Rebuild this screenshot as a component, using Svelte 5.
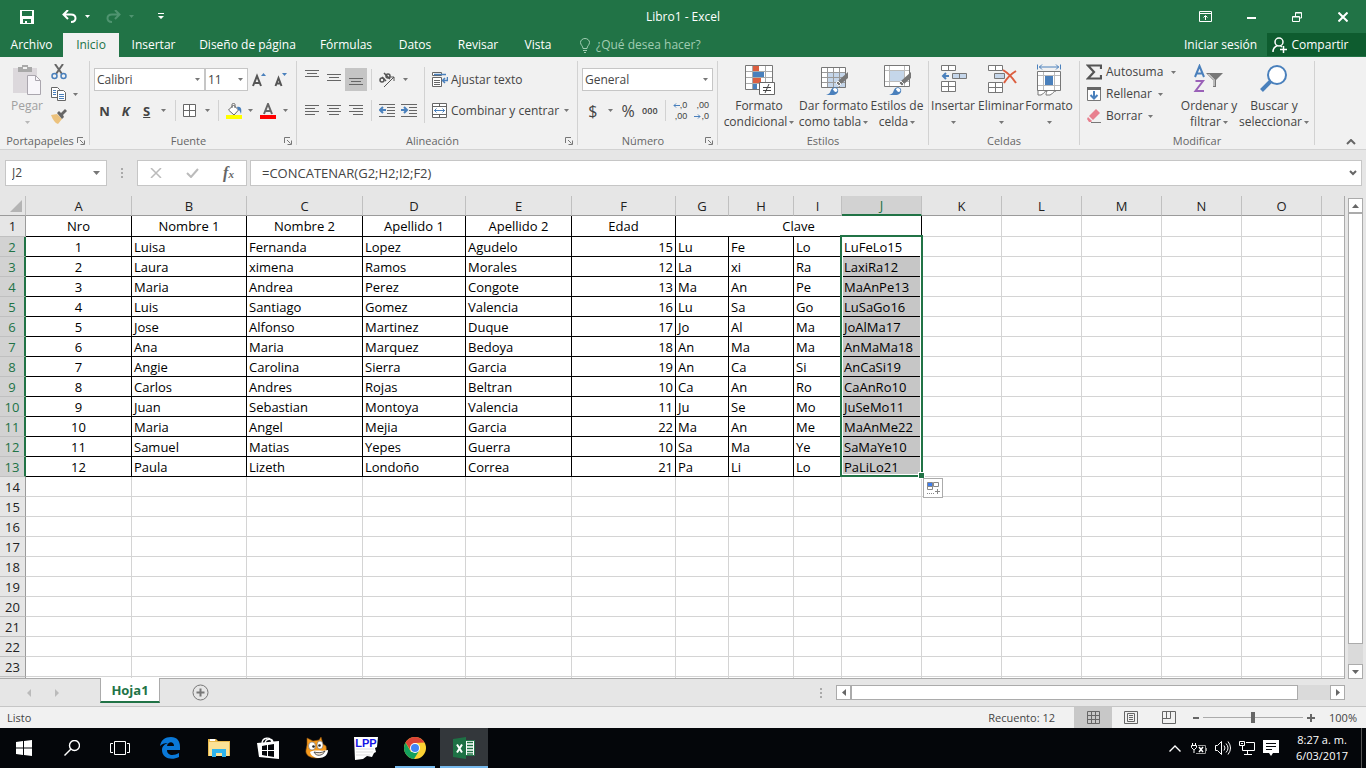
<script lang="ts">
  interface Column {
    id: string;
    width?: number;
  }

  const tabs = [
    { label: 'Archivo', width: 63 },
    { label: 'Inicio', width: 56 },
    { label: 'Insertar', width: 69 },
    { label: 'Diseño de página', width: 119 },
    { label: 'Fórmulas', width: 78 },
    { label: 'Datos', width: 60 },
    { label: 'Revisar', width: 66 },
    { label: 'Vista', width: 54 },
  ];

  const columns: Column[] = [
    { id: 'A', width: 106 },
    { id: 'B', width: 115 },
    { id: 'C', width: 116 },
    { id: 'D', width: 103 },
    { id: 'E', width: 106 },
    { id: 'F', width: 104 },
    { id: 'G', width: 53 },
    { id: 'H', width: 65 },
    { id: 'I', width: 48 },
    { id: 'J', width: 80 },
    { id: 'K', width: 80 },
    { id: 'L', width: 80 },
    { id: 'M', width: 80 },
    { id: 'N', width: 80 },
    { id: 'O', width: 80 },
    { id: '' },
  ];

  const headings = ['Nro', 'Nombre 1', 'Nombre 2', 'Apellido 1', 'Apellido 2', 'Edad'];

  const people = [
    ['1', 'Luisa', 'Fernanda', 'Lopez', 'Agudelo', '15', 'Lu', 'Fe', 'Lo', 'LuFeLo15'],
    ['2', 'Laura', 'ximena', 'Ramos', 'Morales', '12', 'La', 'xi', 'Ra', 'LaxiRa12'],
    ['3', 'Maria', 'Andrea', 'Perez', 'Congote', '13', 'Ma', 'An', 'Pe', 'MaAnPe13'],
    ['4', 'Luis', 'Santiago', 'Gomez', 'Valencia', '16', 'Lu', 'Sa', 'Go', 'LuSaGo16'],
    ['5', 'Jose', 'Alfonso', 'Martinez', 'Duque', '17', 'Jo', 'Al', 'Ma', 'JoAlMa17'],
    ['6', 'Ana', 'Maria', 'Marquez', 'Bedoya', '18', 'An', 'Ma', 'Ma', 'AnMaMa18'],
    ['7', 'Angie', 'Carolina', 'Sierra', 'Garcia', '19', 'An', 'Ca', 'Si', 'AnCaSi19'],
    ['8', 'Carlos', 'Andres', 'Rojas', 'Beltran', '10', 'Ca', 'An', 'Ro', 'CaAnRo10'],
    ['9', 'Juan', 'Sebastian', 'Montoya', 'Valencia', '11', 'Ju', 'Se', 'Mo', 'JuSeMo11'],
    ['10', 'Maria', 'Angel', 'Mejia', 'Garcia', '22', 'Ma', 'An', 'Me', 'MaAnMe22'],
    ['11', 'Samuel', 'Matias', 'Yepes', 'Guerra', '10', 'Sa', 'Ma', 'Ye', 'SaMaYe10'],
    ['12', 'Paula', 'Lizeth', 'Londoño', 'Correa', '21', 'Pa', 'Li', 'Lo', 'PaLiLo21'],
  ];

  // the last row only peeks out above the sheet tabs, so it has no number
  const emptyRows = [...Array.from({ length: 10 }, (_, i) => String(i + 14)), ''];
  const rowHeight = 20;

  let activeTab = $state('Inicio');
  let formula = $state('=CONCATENAR(G2;H2;I2;F2)');
  let cellName = $state('J2');
  let zoom = $state(100);
</script>

{#snippet caret()}
  <svg class="caret" width="5" height="3" viewBox="0 0 5 3" aria-hidden="true">
    <path d="M0 0h5L2.5 3z" fill="currentColor" />
  </svg>
{/snippet}

{#snippet launcher(name: string)}
  <button type="button" class="launcher" aria-label="Configuración de {name}">
    <svg width="8" height="8" viewBox="0 0 8 8" fill="none" stroke="#777">
      <path d="M.5 6V.5H6M3 3l3.5 3.5M7.500 3.500v4h-4" />
    </svg>
  </button>
{/snippet}

{#snippet lines(widths: number[], align: string)}
  <svg width="14" height="14" viewBox="0 0 14 14" stroke="#666" aria-hidden="true">
    {#each widths as w, i}
      {@const x = align === 'left' ? 0 : align === 'right' ? 14 - w : (14 - w) / 2}
      <path d="M{x} {i * 3 + 1.5}h{w}" />
    {/each}
  </svg>
{/snippet}

{#snippet brush()}
  <path d="M30 8v6l-7 6-3-3z" fill="#777" />
  <path d="M20 17l3 3-2 2-3-3z" fill="#777" stroke="#f1f1f1" />
  <path d="M8 31c4-1 4-3 5-5 1-3 5-4 7-1 1 4-2 6-6 6z" fill="#4a80bc" />
  <path d="M15 26c0-2 2-3 4-1 1 2 0 3-2 3-1-1-1-2-2-2z" fill="#fff" />
{/snippet}

<div class="app">
  <header class="titlebar">
    <div class="quick">
      <button type="button" aria-label="Guardar">
        <svg width="14" height="14" viewBox="0 0 14 14" fill="#fff">
          <path fill-rule="evenodd" d="M0 0h14v14H0zM2 1v5h10V1zM3 9v4h2v-2h2v2h4V9z" />
        </svg>
      </button>
      <button type="button" class="undo" aria-label="Deshacer">
        <svg width="15" height="13" viewBox="0 0 15 13" fill="none" stroke="#fff" stroke-width="2">
          <path d="M6 0L1.500 4.500 6 9M2 4.500h7c6 0 6 7.500 0 7.500" />
        </svg>
        {@render caret()}
      </button>
      <button type="button" class="redo" aria-label="Rehacer">
        <svg width="15" height="13" viewBox="0 0 15 13" fill="none" stroke="currentColor" stroke-width="2">
          <path d="M9 0l4.500 4.500L9 9M13 4.500H6C0 4.500 0 12 6 12" />
        </svg>
        {@render caret()}
      </button>
      <button type="button" aria-label="Personalizar barra">
        <svg width="6" height="7" viewBox="0 0 6 7" fill="#fff"><path d="M0 0h6v1H0zM0 3h6L3 6z" /></svg>
      </button>
    </div>
    <h1>Libro1 - Excel</h1>
    <div class="window-buttons">
      <button type="button" aria-label="Opciones de la cinta">
        <svg width="13" height="11" viewBox="0 0 13 11" fill="none" stroke="#fff">
          <path d="M.5.5h12v10H.5zM.5 2.500h12M6.500 9V5M4.500 6.500l2-2 2 2" />
        </svg>
      </button>
      <button type="button" aria-label="Minimizar">
        <svg width="10" height="10" viewBox="0 0 10 10"><path d="M1 5h9v2H1z" fill="#fff" /></svg>
      </button>
      <button type="button" aria-label="Restaurar">
        <svg width="10" height="10" viewBox="0 0 10 10" fill="none" stroke="#fff">
          <path d="M.5 4.500h7v5h-7zM.5 5h7M3.500 4V.5h6v5.500H8M3.500 1h6" />
        </svg>
      </button>
      <button type="button" aria-label="Cerrar">
        <svg width="10" height="10" viewBox="0 0 10 10" stroke="#fff" stroke-width="2"><path d="M.5.5l9 9M9.500.5l-9 9" /></svg>
      </button>
    </div>
  </header>

  <nav class="tabs">
    {#each tabs as tab}
      <button
        type="button"
        class="tab"
        class:tab--active={tab.label === activeTab}
        style:width="{tab.width}px"
        onclick={() => (activeTab = tab.label)}
      >
        {tab.label}
      </button>
    {/each}
    <button type="button" class="tell-me">
      <svg width="10" height="15" viewBox="0 0 10 15" fill="none" stroke="currentColor">
        <path d="M3 10.500C3 8 .5 7 .5 4.500a4.500 4 0 0 1 9 0C9.500 7 7 8 7 10.500zM3 12.500h4M4 14.500h2" />
      </svg>
      ¿Qué desea hacer?
    </button>
    <a class="sign-in" href="#cuenta">Iniciar sesión</a>
    <button type="button" class="share">
      <svg width="15" height="16" viewBox="0 0 15 16" fill="none" stroke="#fff" stroke-width="1.500">
        <circle cx="7" cy="5" r="4" />
        <path d="M1 15c0-4 2-5.500 4.500-6.500M8.500 9l1.500 1M8 12.500h7M11.500 9v7" />
      </svg>
      Compartir
    </button>
  </nav>

  <section class="ribbon">
    <div class="group group--clipboard">
      <div class="group__body">
        <button type="button" class="big big--disabled">
          <svg width="32" height="32" viewBox="0 0 32 32">
            <path d="M2 4h24v25H2z" fill="#dcd8dc" />
            <path d="M7 8V3h4V1h6v2h4v5z" fill="#a9a9a9" />
            <path d="M12 3h4v2h-4z" fill="#f1f1f1" />
            <path d="M16.500 11.500h8l5 5v14h-13z" fill="#f8f6fa" stroke="#aaa6ae" />
            <path d="M24.500 11.500v5h5" fill="none" stroke="#aaa6ae" />
          </svg>
          <span>Pegar</span>
          <span>{@render caret()}</span>
        </button>
        <div class="stack">
          <button type="button" class="mini" aria-label="Cortar">
            <svg width="16" height="16" viewBox="0 0 16 16" fill="none">
              <path d="M4 0l7 10M12 0L5 10" stroke="#666" stroke-width="2" />
              <circle cx="3.500" cy="12" r="2.500" stroke="#4a80bc" stroke-width="1.500" />
              <circle cx="12.500" cy="12" r="2.500" stroke="#4a80bc" stroke-width="1.500" />
            </svg>
          </button>
          <button type="button" class="mini" aria-label="Copiar">
            <svg width="16" height="16" viewBox="0 0 16 16" fill="#fff" stroke="#666">
              <path d="M.5 1.500h6l2 2v8h-8z" />
              <path d="M6.500 4.500h6l2 2v8h-8z" />
              <path d="M2 4.500h3M2 6.500h3M2 8.500h3M8 8.500h5M8 10.500h5M8 12.500h5" stroke="#4a80bc" />
            </svg>
            {@render caret()}
          </button>
          <button type="button" class="mini" aria-label="Copiar formato">
            <svg width="16" height="16" viewBox="0 0 16 16">
              <path d="M0 7l6-1 5 5-4 5c-3-1-5-4-7-9z" fill="#ecc27d" />
              <path d="M6 5l2-2 2 2 4-4 2 2-4 4 1 2-2 2z" fill="#666" />
            </svg>
          </button>
        </div>
      </div>
      <footer><span>Portapapeles</span>{@render launcher('Portapapeles')}</footer>
    </div>

    <div class="group group--font">
      <div class="group__rows">
        <div class="row">
          <label class="combo combo--font">
            <select aria-label="Fuente"><option>Calibri</option></select>{@render caret()}
          </label>
          <label class="combo combo--size">
            <select aria-label="Tamaño"><option>11</option></select>{@render caret()}
          </label>
          <button type="button" class="tool" aria-label="Aumentar tamaño">
            <svg width="16" height="16" viewBox="0 0 16 16" fill="none">
              <path d="M2 14L6 4l4 10M3.500 11h5" stroke="#555" stroke-width="2" />
              <path d="M10 4h5l-2.500-3z" fill="#4a80bc" />
            </svg>
          </button>
          <button type="button" class="tool" aria-label="Disminuir tamaño">
            <svg width="16" height="16" viewBox="0 0 16 16" fill="none">
              <path d="M2.500 14l3-8 3 8M4 11.500h3" stroke="#555" stroke-width="2" />
              <path d="M9 1h5l-2.500 3z" fill="#4a80bc" />
            </svg>
          </button>
        </div>
        <div class="row">
          <button type="button" class="tool letter"><b>N</b></button>
          <button type="button" class="tool letter"><b><i>K</i></b></button>
          <button type="button" class="tool letter"><b><u>S</u></b></button>
          <button type="button" class="drop" aria-label="Más subrayados">{@render caret()}</button>
          <span class="rule"></span>
          <button type="button" class="tool" aria-label="Bordes">
            <svg width="14" height="14" viewBox="0 0 14 14" fill="#fff" stroke="#666"><path d="M.5.5h12v12H.5zM.5 6.500h12M6.500.5v12" /></svg>
          </button>
          <button type="button" class="drop" aria-label="Más bordes">{@render caret()}</button>
          <span class="rule"></span>
          <button type="button" class="tool" aria-label="Color de relleno">
            <svg width="16" height="16" viewBox="0 0 16 16">
              <path d="M2.500 7l5-5 5 5-4.500 5z" fill="#fff" stroke="#666" />
              <path d="M6 5V1.500C6 0 9 0 9 1.500V5" fill="none" stroke="#666" />
              <path d="M11 4c4-1 5 2 4 7-1-2-1-4-3-4z" fill="#4a80bc" />
              <path d="M0 12h16v4H0z" fill="#ff0" />
            </svg>
          </button>
          <button type="button" class="drop" aria-label="Más colores de relleno">{@render caret()}</button>
          <button type="button" class="tool" aria-label="Color de fuente">
            <svg width="16" height="16" viewBox="0 0 16 16">
              <path d="M4 11L8 1l4 10M5.500 8h5" fill="none" stroke="#666" stroke-width="2" />
              <path d="M0 12h16v4H0z" fill="red" />
            </svg>
          </button>
          <button type="button" class="drop" aria-label="Más colores de fuente">{@render caret()}</button>
        </div>
      </div>
      <footer><span>Fuente</span>{@render launcher('Fuente')}</footer>
    </div>

    <div class="group group--align">
      <div class="group__body">
        <div class="group__rows">
          <div class="row">
            <button type="button" class="tool tool--top" aria-label="Alinear arriba">{@render lines([14, 10, 14], 'center')}</button>
            <button type="button" class="tool" aria-label="Alinear en el medio">{@render lines([14, 10, 14], 'center')}</button>
            <button type="button" class="tool tool--bottom tool--on" aria-label="Alinear abajo">{@render lines([14, 10, 14], 'center')}</button>
            <span class="rule"></span>
            <button type="button" class="tool" aria-label="Orientación">
              <svg width="16" height="16" viewBox="0 0 16 16" fill="none" stroke="#555">
                <circle cx="3" cy="8" r="2" stroke-width="1.500" />
                <path d="M3 5l4 4M5 1l6 6" stroke-width="1.500" />
                <circle cx="9" cy="4" r="2" stroke-width="1.500" />
                <path d="M5 15L15 5M11 5h4v4" />
              </svg>
            </button>
            <button type="button" class="drop" aria-label="Más orientaciones">{@render caret()}</button>
          </div>
          <div class="row">
            <button type="button" class="tool" aria-label="Alinear a la izquierda">{@render lines([14, 10, 14, 10], 'left')}</button>
            <button type="button" class="tool" aria-label="Centrar">{@render lines([14, 10, 14, 10], 'center')}</button>
            <button type="button" class="tool" aria-label="Alinear a la derecha">{@render lines([14, 10, 14, 10], 'right')}</button>
            <span class="rule"></span>
            <button type="button" class="tool" aria-label="Disminuir sangría">
              <svg width="16" height="14" viewBox="0 0 16 14" fill="none" stroke="#666">
                <path d="M0 .5h16M8 3.500h8M8 6.500h8M8 9.500h8M0 12.500h16" />
                <path d="M7 6H1M4 3L1 6l3 3" stroke="#4a80bc" stroke-width="2" />
              </svg>
            </button>
            <button type="button" class="tool" aria-label="Aumentar sangría">
              <svg width="16" height="14" viewBox="0 0 16 14" fill="none" stroke="#666">
                <path d="M0 .5h16M8 3.500h8M8 6.500h8M8 9.500h8M0 12.500h16" />
                <path d="M0 6h6M3 3l3 3-3 3" stroke="#4a80bc" stroke-width="2" />
              </svg>
            </button>
          </div>
        </div>
        <span class="rule rule--tall"></span>
        <div class="group__rows">
          <button type="button" class="row command">
            <svg width="16" height="16" viewBox="0 0 16 16" fill="#fff" stroke="#666">
              <path d="M.5.500h9v3h-9zM.5 5.500h9v9h-9zM2 8.500h6M2 10.500h6M2 12.500h6" />
              <path d="M2 2.500h12M15.500 5v3.500H11M13 6l-2.500 2.500L13 11" fill="none" stroke="#4a80bc" stroke-width="1.500" />
            </svg>
            Ajustar texto
          </button>
          <button type="button" class="row command">
            <svg width="16" height="16" viewBox="0 0 16 16" fill="#fff" stroke="#666">
              <path d="M.5.5h14v14H.5zM.5 3.500h14M.5 11.500h14M7.500.5v3M7.500 11.500v3" />
              <path d="M2 7.500h11M4.500 5.500l-2 2 2 2M10.500 5.500l2 2-2 2" fill="none" stroke="#4a80bc" />
            </svg>
            <span class="command__text">Combinar y centrar</span>
            {@render caret()}
          </button>
        </div>
      </div>
      <footer><span>Alineación</span>{@render launcher('Alineación')}</footer>
    </div>

    <div class="group group--number">
      <div class="group__rows">
        <div class="row">
          <label class="combo combo--wide">
            <select aria-label="Formato de número"><option>General</option></select>{@render caret()}
          </label>
        </div>
        <div class="row">
          <button type="button" class="tool symbol">$</button>
          <button type="button" class="drop" aria-label="Más monedas">{@render caret()}</button>
          <button type="button" class="tool symbol">%</button>
          <button type="button" class="tool zeros">000</button>
          <span class="rule"></span>
          <button type="button" class="tool decimals" aria-label="Aumentar decimales">
            <span>
              <svg width="7" height="5" viewBox="0 0 7 5" fill="none" stroke="#4a80bc"><path d="M7 2.500H1M3 .5l-2 2 2 2" /></svg>,0
            </span>
            <span>,00</span>
          </button>
          <button type="button" class="tool decimals" aria-label="Disminuir decimales">
            <span>,00</span>
            <span>
              <svg width="7" height="5" viewBox="0 0 7 5" fill="none" stroke="#4a80bc"><path d="M0 2.500h6M4 .5l2 2-2 2" /></svg>,0
            </span>
          </button>
        </div>
      </div>
      <footer><span>Número</span>{@render launcher('Número')}</footer>
    </div>

    <div class="group group--styles">
      <div class="group__body">
        <button type="button" class="big">
          <svg width="32" height="32" viewBox="0 0 32 32" fill="none">
            <path d="M2.500 1.500h27v24h-27z" fill="#fff" />
            <path d="M9 2h7v6H9zM9 14h9v6H9z" fill="#dc5f40" />
            <path d="M9 8h12v6H9zM9 20h5v6H9z" fill="#4a80bc" />
            <path d="M2.500 7.500h27M2.500 13.500h27M2.500 19.500h27M9.500 2v24M22.500 2v24" stroke="#aaa" />
            <path d="M2.500 1.500h27v24h-27z" stroke="#777" />
            <path d="M16.500 18.500h15v12h-15z" fill="#fff" stroke="#666" />
            <path d="M20 23.500h8M20 26.500h8M26 20l-4 9" stroke="#444" />
          </svg>
          <span>Formato</span>
          <span>condicional {@render caret()}</span>
        </button>
        <button type="button" class="big big--table">
          <svg width="32" height="32" viewBox="0 0 32 32" fill="none">
            <path d="M3.500 3.500h24v20h-24z" fill="#fff" />
            <path d="M10 9h18v15H10z" fill="#c5d6ea" />
            <path d="M3.500 8.500h24M3.500 13.500h24M3.500 18.500h24M9.500 4v20M15.500 4v20M21.500 4v20" stroke="#999" />
            <path d="M3.500 3.500h24v20h-24z" stroke="#777" />
            {@render brush()}
          </svg>
          <span>Dar formato</span>
          <span>como tabla {@render caret()}</span>
        </button>
        <button type="button" class="big big--cell">
          <svg width="32" height="32" viewBox="0 0 32 32" fill="none">
            <path d="M3.500 1.500h25v21h-25z" fill="#fff" />
            <path d="M3.500 6.500h25M3.500 17.500h25M8.500 2v21M23.500 2v21" stroke="#bbb" />
            <path d="M9 7h14v10H9z" fill="#c5d6ea" />
            <path d="M3.500 1.500h25v21h-25z" stroke="#777" />
            {@render brush()}
          </svg>
          <span>Estilos de</span>
          <span>celda {@render caret()}</span>
        </button>
      </div>
      <footer><span>Estilos</span></footer>
    </div>

    <div class="group group--cells">
      <div class="group__body">
        <button type="button" class="big">
          <svg width="32" height="32" viewBox="0 0 32 32" fill="#fff" stroke="#777">
            <path d="M4.500 1.500h14v5h-14zM11.500 1.500v5M4.500 17.500h14v10h-14zM4.500 22.500h14M11.500 17.500v10" />
            <path d="M15.500 9.500h14v5h-14zM22.500 9.500v5" fill="#c5d6ea" />
            <path d="M12 12H6M9 9l-3 3 3 3" fill="none" stroke="#4a80bc" stroke-width="2" />
          </svg>
          <span>Insertar</span>
          <span>{@render caret()}</span>
        </button>
        <button type="button" class="big">
          <svg width="32" height="32" viewBox="0 0 32 32" fill="#fff" stroke="#777">
            <path d="M3.500 1.500h14v5h-14zM10.500 1.500v5M3.500 18.500h14v10h-14zM3.500 23.500h14M10.500 18.500v10" />
            <path d="M9.500 9.500h10v5h-10z" fill="#c5d6ea" />
            <path d="M18 6c5 3 9 7 13 13M31 7c-5 3-9 7-12 12" fill="none" stroke="#dc5f40" stroke-width="2" />
          </svg>
          <span>Eliminar</span>
          <span>{@render caret()}</span>
        </button>
        <button type="button" class="big">
          <svg width="32" height="32" viewBox="0 0 32 32" fill="#fff">
            <path d="M5 26v5h3c3-1 3-4 6-4-1 2-1 4-1 4h4c3-1 3-4 6-4" stroke="#777" />
            <path d="M4.500 7.500h23v19h-23z" />
            <path d="M4 11.500h24M4 21.500h24M10.500 7v20M21.500 7v20" stroke="#bbb" />
            <path d="M4.500 7.500h23v19h-23z" fill="none" stroke="#777" />
            <path d="M12 12h8v9h-8z" fill="#4a80bc" />
            <path d="M4.500.5v5M27.500.5v5M6 3h20M9 .5L6.500 3 9 5.500M23 .5L25.500 3 23 5.500" fill="none" stroke="#4a80bc" />
          </svg>
          <span>Formato</span>
          <span>{@render caret()}</span>
        </button>
      </div>
      <footer><span>Celdas</span></footer>
    </div>

    <div class="group group--edit">
      <div class="group__body">
        <div class="stack stack--wide">
          <button type="button" class="mini">
            <svg width="16" height="16" viewBox="0 0 16 16"><path d="M15 5V1.500H2L8 8l-6 6.500h13V11" fill="none" stroke="#555" stroke-width="2.200" /></svg>
            <span class="mini__text">Autosuma</span>
            {@render caret()}
          </button>
          <button type="button" class="mini">
            <svg width="16" height="16" viewBox="0 0 16 16">
              <path d="M1.500 1.500h13v13h-13z" fill="#fff" stroke="#777" />
              <path d="M1 1h14v3H1z" fill="#666" />
              <path d="M8 5v8M4.500 9L8 12.500 11.500 9" fill="none" stroke="#4a80bc" stroke-width="2" />
            </svg>
            Rellenar
            {@render caret()}
          </button>
          <button type="button" class="mini">
            <svg width="16" height="16" viewBox="0 0 16 16">
              <path d="M10 1l4 4-7 7-4-4z" fill="#e8808f" />
              <path d="M2 9l4 4-1 1H3l-2-3z" fill="#e8808f" />
              <path d="M5 14.500h10" stroke="#777" />
            </svg>
            Borrar
            {@render caret()}
          </button>
        </div>
        <button type="button" class="big big--sort">
          <svg width="32" height="32" viewBox="0 0 32 32" fill="none">
            <path d="M2 13L6.500 2 11 13M3.500 9.500h6" stroke="#4a80bc" stroke-width="2" />
            <path d="M2.500 17H10L2.500 27H11" stroke="#9a61b8" stroke-width="2" />
            <path d="M13 9h17l-7 7v7h-3v-7z" fill="#777" />
            <path d="M15.500 10l5.500 5.500V22" stroke="#fff" />
          </svg>
          <span>Ordenar y</span>
          <span>filtrar {@render caret()}</span>
        </button>
        <button type="button" class="big">
          <svg width="32" height="32" viewBox="0 0 32 32" fill="none">
            <circle cx="19" cy="11" r="9" fill="#fff" stroke="#4a80bc" stroke-width="2" />
            <path d="M13 17L3.500 26.500" stroke="#4a80bc" stroke-width="4" />
          </svg>
          <span>Buscar y</span>
          <span>seleccionar {@render caret()}</span>
        </button>
      </div>
      <footer><span>Modificar</span></footer>
    </div>

    <button type="button" class="collapse" aria-label="Contraer la cinta">
      <svg width="10" height="6" viewBox="0 0 10 6" fill="none" stroke="#666" stroke-width="2"><path d="M1 5l4-4 4 4" /></svg>
    </button>
  </section>

  <section class="formula-bar">
    <label class="name-box">
      <input type="text" aria-label="Cuadro de nombres" bind:value={cellName} />
      <svg width="7" height="4" viewBox="0 0 7 4"><path d="M0 0h7L3.500 4z" fill="#777" /></svg>
    </label>
    <span class="grip"></span>
    <div class="formula-actions">
      <button type="button" aria-label="Cancelar">
        <svg width="12" height="10" viewBox="0 0 12 10" stroke="#bbb" stroke-width="1.500"><path d="M1 0l10 10M11 0L1 10" /></svg>
      </button>
      <button type="button" aria-label="Introducir">
        <svg width="13" height="10" viewBox="0 0 13 10" fill="none" stroke="#bbb" stroke-width="2"><path d="M1 5l4 4 7-8" /></svg>
      </button>
      <button type="button" class="fx" aria-label="Insertar función"><i>f<small>x</small></i></button>
    </div>
    <label class="formula-input">
      <input type="text" aria-label="Barra de fórmulas" bind:value={formula} />
      <svg width="8" height="6" viewBox="0 0 8 6" fill="none" stroke="#666" stroke-width="2"><path d="M1 1l3 3 3-3" /></svg>
    </label>
  </section>

  <main class="workspace">
    <div class="sheet">
      <table>
        <colgroup>
          <col class="row-numbers" />
          {#each columns as column}
            <col style:width={column.width ? `${column.width}px` : 'auto'} />
          {/each}
        </colgroup>
        <thead>
          <tr>
            <th class="corner"><svg width="12" height="12" viewBox="0 0 12 12"><path d="M12 0v12H0z" fill="#b4b4b4" /></svg></th>
            {#each columns as column}
              <th class:selected={column.id === 'J'}>{column.id}</th>
            {/each}
          </tr>
        </thead>
        <tbody>
          <tr class="headings">
            <th>1</th>
            {#each headings as heading}
              <td class="filled center">{heading}</td>
            {/each}
            <td class="filled center" colspan="4">Clave</td>
            {#each columns.slice(10) as _}
              <td></td>
            {/each}
          </tr>
          {#each people as person, r}
            <tr>
              <th class="selected">{r + 2}</th>
              {#each person as value, c}
                <td
                  class="filled"
                  class:center={c === 0}
                  class:number={c === 5}
                  class:result={c === 9}
                  class:shaded={c === 9 && r > 0}
                >
                  {value}
                  {#if c === 9 && r === 0}
                    <div class="selection" style:height="{people.length * rowHeight + 2}px">
                      <span class="handle"></span>
                      <button type="button" class="autofill" aria-label="Opciones de autorrelleno">
                        <svg width="15" height="14" viewBox="0 0 15 14" fill="none" stroke="#888">
                          <path d="M1.500 1.500h5v4h-5z" fill="#3c7df0" />
                          <path d="M7.500 1.500h5v4h-5zM1.500 5.500h5v3h-5zM9 10.500h5M11.500 8v5" />
                          <path d="M1 12.500h7" stroke-dasharray="1 1" />
                        </svg>
                      </button>
                    </div>
                  {/if}
                </td>
              {/each}
              {#each columns.slice(10) as _}
                <td></td>
              {/each}
            </tr>
          {/each}
          {#each emptyRows as n}
            <tr>
              <th>{n}</th>
              {#each columns as _}
                <td></td>
              {/each}
            </tr>
          {/each}
        </tbody>
      </table>
    </div>
    <div class="vscroll">
      <button type="button" aria-label="Subir"><svg width="7" height="4" viewBox="0 0 7 4"><path d="M0 4h7L3.500 0z" fill="#666" /></svg></button>
      <span class="vscroll__thumb"></span>
      <button type="button" aria-label="Bajar"><svg width="7" height="4" viewBox="0 0 7 4"><path d="M0 0h7L3.500 4z" fill="#666" /></svg></button>
    </div>
  </main>

  <div class="sheet-bar">
    <div class="sheet-nav">
      <button type="button" aria-label="Hoja anterior"><svg width="4" height="8" viewBox="0 0 4 8"><path d="M4 0v8L0 4z" fill="#bbb" /></svg></button>
      <button type="button" aria-label="Hoja siguiente"><svg width="4" height="8" viewBox="0 0 4 8"><path d="M0 0v8l4-4z" fill="#bbb" /></svg></button>
    </div>
    <button type="button" class="sheet-tab">Hoja1</button>
    <button type="button" class="add-sheet" aria-label="Hoja nueva">
      <svg width="17" height="17" viewBox="0 0 17 17" fill="none" stroke="#777">
        <circle cx="8.500" cy="8.500" r="7.500" />
        <path d="M8.500 4.500v8M4.500 8.500h8" stroke-width="2" />
      </svg>
    </button>
    <span class="grip"></span>
    <div class="hscroll">
      <button type="button" aria-label="Izquierda"><svg width="4" height="7" viewBox="0 0 4 7"><path d="M4 0v7L0 3.500z" fill="#666" /></svg></button>
      <span class="hscroll__thumb"></span>
      <button type="button" aria-label="Derecha"><svg width="4" height="7" viewBox="0 0 4 7"><path d="M0 0v7l4-3.500z" fill="#666" /></svg></button>
    </div>
  </div>

  <footer class="status">
    <span>Listo</span>
    <span class="status__count">Recuento: 12</span>
    <button type="button" class="view view--on" aria-label="Normal">
      <svg width="13" height="13" viewBox="0 0 13 13" fill="none" stroke="#666"><path d="M.5.5h12v12H.5zM.5 4.500h12M.5 8.500h12M4.500.5v12M8.500.5v12" /></svg>
    </button>
    <button type="button" class="view" aria-label="Diseño de página">
      <svg width="14" height="13" viewBox="0 0 14 13" fill="none" stroke="#666"><path d="M.5.5h13v12H.5zM3.500 2.500h7v8h-7zM5 4.500h4M5 6.500h4M5 8.500h4" /></svg>
    </button>
    <button type="button" class="view" aria-label="Saltos de página">
      <svg width="14" height="13" viewBox="0 0 14 13" fill="none" stroke="#666"><path d="M.5.5h13v12H.5zM.5 7.500h8V.5M4.500.5v7" /></svg>
    </button>
    <button type="button" class="zoom-step" aria-label="Alejar"><svg width="8" height="8" viewBox="0 0 8 8"><path d="M1 3h6v2H1z" fill="#666" /></svg></button>
    <input class="zoom" type="range" min="0" max="200" aria-label="Zoom" bind:value={zoom} />
    <button type="button" class="zoom-step" aria-label="Acercar"><svg width="8" height="8" viewBox="0 0 8 8"><path d="M0 3h3V0h2v3h3v2H5v3H3V5H0z" fill="#666" /></svg></button>
    <span class="zoom-value">{zoom}%</span>
  </footer>

  <div class="taskbar">
    <div class="task-system">
      <button type="button" aria-label="Inicio">
        <svg width="16" height="16" viewBox="0 0 16 16" fill="#fff"><path d="M0 2l7-1v6.500H0zM8 1l8-1v7.500H8zM0 8.500h7V15l-7-1zM8 8.500h8V16l-8-1z" /></svg>
      </button>
      <button type="button" aria-label="Buscar">
        <svg width="16" height="16" viewBox="0 0 16 16" fill="none" stroke="#fff" stroke-width="1.400"><circle cx="10.500" cy="5.500" r="5" /><path d="M7 9L.5 15.500" /></svg>
      </button>
      <button type="button" aria-label="Vista de tareas">
        <svg width="20" height="15" viewBox="0 0 20 15" fill="none" stroke="#fff"><path d="M4.500.5h11v13h-11zM3 2.500H.5v9H3M17 2.500h2.500v9H17" /></svg>
      </button>
    </div>
    <div class="task-apps">
      <button type="button" aria-label="Edge">
        <svg width="21" height="22" viewBox="0 0 21 22">
          <path fill="#0a78d7" d="M0 9C1 3 5 0 11 0c6 0 9 4 9 10v3H7c0 6 7 6 12 3v4C11 24 2 21 2 13 2 9 5 7 8 6 4 6 2 7 0 9zM7 9h7c0-5-6-5-7 0z" />
        </svg>
      </button>
      <button type="button" aria-label="Explorador">
        <svg width="22" height="20" viewBox="0 0 22 20">
          <path d="M0 1h8l2 2h12v15H0z" fill="#e9b94e" />
          <path d="M1 4h20v14H1z" fill="#fbe196" />
          <path d="M4 19v-8h14v8h-4v-4H8v4z" fill="#2fb4ec" />
          <path d="M2 1h5v2H2z" fill="#fff" />
        </svg>
      </button>
      <button type="button" aria-label="Tienda">
        <svg width="22" height="23" viewBox="0 0 22 23">
          <path d="M0 6l22-2v18L2 20z" fill="#fff" />
          <path d="M5 7c0-7 9-8 10-1M8 6c1-5 8-5 8 0" fill="none" stroke="#fff" stroke-width="1.300" />
          <path d="M5 9l5-1v5H5zM11 8l6-1v6h-6zM5 14h5v5l-5-1zM11 14h6v6l-6-1z" fill="#05070b" />
        </svg>
      </button>
      <button type="button" aria-label="Scratch">
        <svg width="24" height="22" viewBox="0 0 24 22">
          <path d="M2 1l6 3 6-1 2-3 2 7 3 2c2 8-4 12-10 12S0 18 1 13l1-5z" fill="#f79b1e" stroke="#8b5312" stroke-width=".6" />
          <ellipse cx="7" cy="9" rx="3.500" ry="4" fill="#fff" stroke="#555" stroke-width=".5" />
          <ellipse cx="15" cy="8" rx="3" ry="4" fill="#fff" stroke="#555" stroke-width=".5" />
          <circle cx="8.500" cy="9.500" r="1.300" fill="#222" />
          <circle cx="14.500" cy="8.500" r="1.300" fill="#222" />
          <path d="M5 15c5-3 12 0 18-2 0 5-4 8-9 8-4 0-8-2-9-6z" fill="#fff" />
          <path d="M9 15c4 1 8 1 11-1-2 5-9 6-11 1z" fill="#f8e6d2" stroke="#333" stroke-width=".8" />
        </svg>
      </button>
      <button type="button" class="lpp" aria-label="LPP">
        <svg width="24" height="23" viewBox="0 0 24 23">
          <path d="M0 0h24l-1 10-2 1 1 4-2 1-2 4-5-1-4 3-8 1z" fill="#fff" />
          <path d="M2 12h18M2 15h17M2 18h14" stroke="#ddd" />
          <text x="12" y="10" text-anchor="middle">LPP</text>
        </svg>
      </button>
      <button type="button" class="running" aria-label="Chrome">
        <svg width="22" height="22" viewBox="0 0 22 22">
          <circle cx="11" cy="11" r="11" fill="#fdd233" />
          <path d="M1.500 5.500A11 11 0 0 1 20.500 5.500L11 6l-4 8z" fill="#db4437" />
          <path d="M1.500 5.500A11 11 0 0 0 10 22l5-8-8 1z" fill="#14a05d" />
          <circle cx="11" cy="11" r="5" fill="#fff" />
          <circle cx="11" cy="11" r="4" fill="#4285f4" />
        </svg>
      </button>
      <button type="button" class="running current" aria-label="Excel">
        <svg width="22" height="22" viewBox="0 0 22 22">
          <path d="M11 3.500h10.500v15H11z" fill="#fff" stroke="#217346" />
          <path d="M14 5.500h6M14 8.500h6M14 11.500h6M14 14.500h6M14 17h6" stroke="#217346" stroke-width="1.500" />
          <path d="M0 2l13-2v22L0 20z" fill="#1e7145" />
          <path d="M4 7.500l5 8M9 7.500l-5 8" stroke="#fff" stroke-width="2" />
        </svg>
      </button>
    </div>
    <div class="tray">
      <button type="button" aria-label="Iconos ocultos"><svg width="12" height="7" viewBox="0 0 12 7" fill="none" stroke="#fff" stroke-width="1.400"><path d="M.5 6.500L6 1l5.500 5.500" /></svg></button>
      <button type="button" aria-label="Batería">
        <svg width="17" height="13" viewBox="0 0 17 13" fill="none" stroke="#fff">
          <path d="M.5 3.500h5v2l-2 2h-1l-2-2zM1.500 1v2M4.500 1v2M3 7.500V11" />
          <path d="M7 3.500h7.500v8H5M15.500 6v3" stroke="#999" />
          <path d="M8 5l4 5M12 5l-4 5" stroke-width="1.500" />
        </svg>
      </button>
      <button type="button" aria-label="Volumen">
        <svg width="17" height="14" viewBox="0 0 17 14" fill="none" stroke="#fff"><path d="M.5 4.500h2l4-4v13l-4-4h-2zM9 4.500q2 2.500 0 5M11 2.500q4 4.500 0 9M13 .5q5 6.500 0 13" /></svg>
      </button>
      <button type="button" aria-label="Red">
        <svg width="16" height="14" viewBox="0 0 16 14" fill="none" stroke="#fff"><path d="M.5.500h5v4h-5zM7 1.500h8.500v8h-12V5M8.500 10v3M5 13.500h8M2 2.500h2" /></svg>
      </button>
      <button type="button" aria-label="Notificaciones">
        <svg width="16" height="16" viewBox="0 0 16 16"><path d="M0 0h16v13h-6l-2 3-2-3H0z" fill="#fff" /><path d="M3 3.500h10M3 6.500h10M3 9.500h6" stroke="#05070b" /></svg>
      </button>
    </div>
    <button type="button" class="clock"><span>8:27 a. m.</span><span>6/03/2017</span></button>
  </div>
</div>

<style>
  :global(body) {
    margin: 0;
  }

  .app {
    display: flex;
    flex-direction: column;
    height: 100vh;
    overflow: hidden;
    font-family: 'Open Sans', 'Noto Sans', sans-serif;
    font-size: 12px;
    line-height: 16px;
    color: #444;
    background: #e6e6e6;
    white-space: nowrap;
  }

  button,
  input,
  select {
    box-sizing: border-box;
    margin: 0;
    padding: 0;
    border: 0;
    border-radius: 0;
    background: none;
    font: inherit;
    color: inherit;
  }

  button {
    display: flex;
    align-items: center;
    justify-content: center;
  }

  svg {
    display: block;
    flex: none;
  }

  .caret {
    color: #777;
  }

  /* title bar */
  .titlebar {
    display: grid;
    grid-template-columns: 1fr auto 1fr;
    align-items: center;
    flex: none;
    height: 33px;
    background: #217346;
    color: #fff;
  }

  .titlebar h1 {
    margin: 0;
    font-size: 12px;
    font-weight: 400;
  }

  .titlebar .caret {
    color: inherit;
  }

  .quick {
    display: flex;
    align-items: center;
    gap: 16px;
    padding-left: 20px;
  }

  .quick button {
    gap: 8px;
  }

  .quick .undo {
    margin-left: 12px;
  }

  .quick .redo {
    color: #4f9470;
    margin-right: 8px;
  }

  .window-buttons {
    display: flex;
    justify-content: flex-end;
  }

  .window-buttons button {
    width: 46px;
    height: 30px;
  }

  /* ribbon tabs */
  .tabs {
    display: flex;
    flex: none;
    height: 24px;
    background: #217346;
    color: #fff;
  }

  .tab--active {
    background: #f1f1f1;
    color: #217346;
  }

  .tell-me {
    gap: 6px;
    padding-left: 15px;
    color: #a0cdb2;
  }

  .sign-in {
    margin-left: auto;
    padding: 4px 10px;
    color: inherit;
    text-decoration: none;
  }

  .share {
    gap: 4px;
    width: 99px;
    height: 23px;
    padding-right: 12px;
    background: #0e5c2f;
  }

  /* ribbon */
  .ribbon {
    display: flex;
    flex: none;
    height: 92px;
    background: #f1f1f1;
    border-bottom: 1px solid #d2d2d2;
  }

  .group {
    box-sizing: border-box;
    display: flex;
    flex-direction: column;
    justify-content: space-between;
    margin: 4px 0;
    border-right: 1px solid #d2d2d2;
  }

  .group--clipboard {
    width: 90px;
  }

  .group--font {
    width: 207px;
  }

  .group--align {
    width: 281px;
  }

  .group--number {
    width: 140px;
  }

  .group--styles {
    width: 211px;
  }

  .group--cells {
    width: 151px;
  }

  .group--edit {
    width: 235px;
  }

  .group footer {
    display: flex;
    align-items: center;
    height: 9px;
    padding: 0 4px;
    font-size: 11px;
    line-height: 9px;
    color: #666;
  }

  .group footer span {
    flex: 1;
    text-align: center;
  }

  .group__body {
    display: flex;
  }

  .group__rows {
    display: flex;
    flex-direction: column;
    gap: 8px;
    padding: 7px 4px 0;
  }

  .row {
    display: flex;
    align-items: center;
    height: 23px;
  }

  .tool {
    width: 22px;
    height: 23px;
  }

  .tool--on {
    background: #c5c5c5;
  }

  .tool--top {
    padding-bottom: 8px;
  }

  .tool--bottom {
    padding-top: 8px;
  }

  .drop {
    width: 14px;
    height: 23px;
  }

  .rule {
    width: 1px;
    height: 21px;
    margin: 0 4px;
    background: #d2d2d2;
  }

  .rule--tall {
    height: 56px;
    margin: 6px 0 0;
  }

  .letter {
    font-size: 13px;
  }

  .symbol {
    font-size: 16px;
  }

  .zeros {
    font-size: 9px;
    font-weight: 600;
  }

  .decimals {
    flex-direction: column;
    align-items: flex-end;
    padding-right: 4px;
    font-family: 'Liberation Sans', sans-serif;
    font-size: 9px;
    line-height: 11px;
  }

  .decimals span {
    display: flex;
    align-items: center;
    height: 11px;
  }

  .combo {
    display: grid;
    align-items: center;
    box-sizing: border-box;
    height: 23px;
    border: 1px solid #c6c6c6;
    background: #fff;
  }

  .combo > :global(*) {
    grid-area: 1 / 1;
  }

  .combo select {
    appearance: none;
    width: 100%;
    padding-left: 2px;
  }

  .combo .caret {
    justify-self: end;
    margin-right: 4px;
  }

  .combo--font {
    width: 111px;
  }

  .combo--size {
    width: 43px;
  }

  .combo--wide {
    width: 131px;
  }

  .command {
    gap: 3px;
    justify-content: flex-start;
    padding-left: 3px;
  }

  .command__text {
    width: 110px;
    text-align: left;
  }

  .stack {
    box-sizing: border-box;
    display: flex;
    flex-direction: column;
    padding-left: 3px;
  }

  .mini {
    gap: 4px;
    height: 22px;
    justify-content: flex-start;
  }

  .mini .caret {
    margin-left: 2px;
  }

  .mini__text {
    width: 59px;
    text-align: left;
  }

  .stack--wide {
    width: 97px;
    padding-left: 6px;
  }

  .big {
    flex-direction: column;
    justify-content: flex-start;
    padding: 3px 4px 0;
  }

  .big span {
    display: flex;
    align-items: center;
    gap: 2px;
    height: 16px;
  }

  .big svg + span {
    margin-top: 2px;
  }

  .big--disabled {
    width: 42px;
    margin-left: 6px;
    color: #a0a0a0;
  }

  .big--disabled .caret {
    color: #b8b8b8;
  }

  .group--styles .big {
    width: 78px;
    margin-left: 2px;
    padding: 3px 0 0;
  }

  .group--styles .big--table {
    width: 71px;
    margin: 0;
  }

  .group--styles .big--cell {
    width: 56px;
    margin: 0;
  }

  .group--cells .big {
    width: 48px;
    padding: 3px 0 0;
  }

  .group--edit .big {
    width: 66px;
    padding: 3px 0 0;
  }

  .group--edit .big--sort {
    width: 64px;
  }

  .launcher {
    width: 9px;
    height: 9px;
  }

  .collapse {
    align-self: flex-end;
    margin: 0 10px 4px auto;
  }

  /* formula bar */
  .formula-bar {
    display: flex;
    align-items: center;
    flex: none;
    height: 46px;
    padding: 0 4px 0 5px;
  }

  .name-box,
  .formula-actions,
  .formula-input {
    box-sizing: border-box;
    display: flex;
    align-items: center;
    height: 26px;
    border: 1px solid #c6c6c6;
    background: #fff;
  }

  .name-box {
    width: 102px;
    padding: 0 6px;
  }

  .name-box input {
    width: 80px;
    flex: 1;
  }

  .grip {
    width: 2px;
    height: 10px;
    margin: 0 14px;
    background: repeating-linear-gradient(#aaa 0 2px, transparent 2px 4px);
  }

  .formula-actions {
    width: 110px;
    margin-right: 3px;
    justify-content: space-around;
  }

  .fx {
    font-family: 'Liberation Serif', serif;
    font-size: 16px;
    font-weight: 700;
    color: #666;
  }

  .fx small {
    font-size: 11px;
  }

  .formula-input {
    flex: 1;
    padding: 0 4px 0 11px;
  }

  .formula-input input {
    flex: 1;
    font-size: 13px;
  }

  /* grid */
  .workspace {
    display: flex;
    flex: 1;
    min-height: 0;
  }

  .sheet {
    flex: 1;
    overflow: hidden;
    border-right: 1px solid #ababab;
    border-bottom: 1px solid #ababab;
  }

  table {
    width: 100%;
    table-layout: fixed;
    border-collapse: separate;
    border-spacing: 0;
    font-size: 13px;
    line-height: 18px;
    color: #000;
    background: #fff;
  }

  .row-numbers {
    width: 26px;
  }

  th,
  td {
    box-sizing: border-box;
    height: 20px;
    padding: 0 2px;
    border-right: 1px solid #d4d4d4;
    border-bottom: 1px solid #d4d4d4;
  }

  th {
    padding: 0;
    font-weight: 400;
    color: #222;
    background: #e6e6e6;
    border-color: #c0c0c0;
  }

  thead th {
    border-bottom-color: #9b9b9b;
  }

  tbody th {
    border-right-color: #9b9b9b;
  }

  tr > :last-child {
    border-right: 0;
  }

  .corner svg {
    margin: 0 3px 0 auto;
  }

  .headings > * {
    height: 21px;
  }

  th.selected {
    color: #217346;
    background: #d2d2d2;
  }

  thead th.selected {
    border-bottom: 2px solid #217346;
    line-height: 17px;
  }

  tbody th.selected {
    border-right: 2px solid #217346;
  }

  .filled {
    border-color: #000;
  }

  .center {
    text-align: center;
  }

  .number {
    text-align: right;
  }

  .result {
    position: relative;
  }

  .shaded {
    background: #c6c6c6;
  }

  .selection {
    box-sizing: border-box;
    position: absolute;
    z-index: 1;
    top: -2px;
    left: -2px;
    right: -2px;
    border: 2px solid #217346;
    box-shadow: inset 0 0 0 1px #fff;
  }

  .handle {
    position: absolute;
    right: -3px;
    bottom: -3px;
    width: 5px;
    height: 5px;
    background: #217346;
    outline: 1px solid #fff;
  }

  .autofill {
    position: absolute;
    top: 100%;
    left: 100%;
    width: 20px;
    height: 20px;
    margin: 3px 0 0 2px;
    border: 1px solid #ababab;
    background: #fff;
  }

  .vscroll {
    display: flex;
    flex-direction: column;
    width: 15px;
    margin: 2px 3px 0;
    background: #dadada;
  }

  .vscroll button,
  .vscroll__thumb,
  .hscroll button,
  .hscroll__thumb {
    box-sizing: border-box;
    border: 1px solid #ababab;
    background: #fff;
  }

  .vscroll button,
  .hscroll button {
    width: 15px;
    height: 15px;
    flex: none;
  }

  .vscroll__thumb {
    flex: 1;
    margin-bottom: 20px;
  }

  /* sheet tabs */
  .sheet-bar {
    display: flex;
    align-items: center;
    flex: none;
    height: 27px;
    border-bottom: 1px solid #c6c6c6;
  }

  .sheet-nav {
    display: flex;
    gap: 24px;
    width: 73px;
    padding-left: 27px;
  }

  .sheet-tab {
    align-self: flex-start;
    width: 60px;
    height: 25px;
    margin-top: -1px;
    border: 1px solid #ababab;
    border-top: 0;
    border-bottom: 2px solid #217346;
    background: #fff;
    font-size: 13px;
    font-weight: 700;
    color: #217346;
  }

  .add-sheet {
    margin: 0 auto 0 32px;
  }

  .hscroll {
    display: flex;
    width: 509px;
    margin-right: 21px;
    background: #dadada;
  }

  .hscroll__thumb {
    flex: 1;
    margin-right: 32px;
  }

  /* status bar */
  .status {
    display: flex;
    align-items: center;
    flex: none;
    height: 21px;
    padding: 0 9px 0 7px;
    background: #f1f1f1;
    font-size: 11px;
  }

  .status__count {
    margin: 0 19px 0 auto;
  }

  .view {
    width: 38px;
    height: 21px;
  }

  .view--on {
    background: #c8c8c8;
  }

  .zoom-step {
    width: 12px;
    margin-left: 2px;
  }

  .zoom {
    appearance: none;
    width: 100px;
    height: 11px;
    margin: 0 0 0 1px;
    background: linear-gradient(#ababab, #ababab) center / 100% 1px no-repeat;
  }

  .zoom::-webkit-slider-thumb {
    appearance: none;
    width: 4px;
    height: 11px;
    background: #666;
  }

  .zoom-value {
    margin-left: 12px;
    width: 28px;
    text-align: right;
  }

  /* taskbar */
  .taskbar {
    display: flex;
    flex: none;
    height: 40px;
    background: #04060a;
    color: #fff;
  }

  .task-system,
  .task-apps {
    display: flex;
  }

  .task-system button,
  .task-apps button {
    width: 48px;
    height: 40px;
  }

  .task-apps {
    gap: 1px;
    margin-left: 2px;
  }

  .lpp text {
    font-family: 'Liberation Sans', sans-serif;
    font-size: 11px;
    font-weight: 700;
    fill: #1414e6;
  }

  .running {
    background: linear-gradient(#76b9ed, #76b9ed) center bottom / 40px 2px no-repeat;
  }

  .current {
    background-color: #33373b;
    background-size: 100% 2px;
  }

  .tray {
    display: flex;
    margin-left: auto;
  }

  .tray button {
    width: 24px;
  }

  .clock {
    flex-direction: column;
    width: 79px;
    margin-right: 4px;
    border-right: 1px solid #555;
    font-size: 11px;
  }
</style>
